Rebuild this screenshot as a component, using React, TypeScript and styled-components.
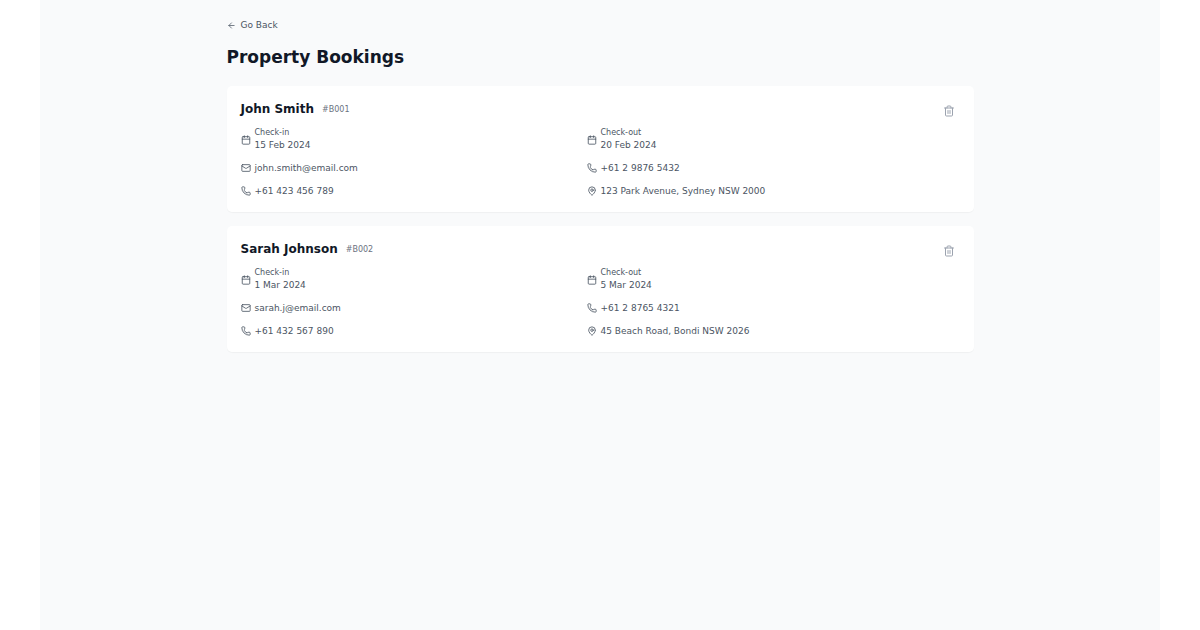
import React from 'react';
import styled, { createGlobalStyle } from 'styled-components';
import { ArrowLeft, Calendar, Mail, MapPin, Phone, Trash2 } from 'lucide-react';

const GlobalStyle = createGlobalStyle`
  *, *::before, *::after { box-sizing: border-box; }
  body {
    margin: 0;
    background: #ffffff;
    font-family: "DejaVu Sans", sans-serif;
    color: #4b5563;
  }
  h1, h2, p { margin: 0; }
  svg { flex-shrink: 0; }
  button { font: inherit; color: inherit; background: none; border: 0; padding: 0; cursor: pointer; }
`;

const Page = styled.div`
  min-height: 100vh;
  margin: 0 40px;
  padding: 18px 16px;
  background: #f9fafb;
`;

const Container = styled.main`
  max-width: 747px;
  margin: 0 auto;
`;

const BackButton = styled.button`
  display: flex;
  align-items: center;
  gap: 5px;
  font-size: 9px;
  line-height: 14px;
`;

const Title = styled.h1`
  margin-top: 15px;
  font-size: 17px;
  line-height: 20px;
  color: #111827;
`;

const BookingList = styled.div`
  display: flex;
  flex-direction: column;
  gap: 14px;
  margin-top: 19px;
`;

const Card = styled.article`
  display: flex;
  align-items: flex-start;
  gap: 19px;
  padding: 14px;
  background: #ffffff;
  border-radius: 5px;
  box-shadow: 0 1px 1px rgba(0, 0, 0, 0.04);
`;

const CardBody = styled.div`
  flex: 1;
  min-width: 0;
`;

const Guest = styled.header`
  display: flex;
  align-items: center;
  gap: 8px;
  margin-bottom: 8px;
`;

const GuestName = styled.h2`
  font-size: 12px;
  line-height: 19px;
  color: #111827;
`;

const Reference = styled.span`
  font-size: 8px;
  line-height: 12px;
  color: #6b7280;
`;

const DeleteButton = styled.button`
  display: flex;
  padding: 5px;
  color: #9ca3af;
`;

const Details = styled.div`
  display: grid;
  grid-template-columns: 1fr 1fr;
  column-gap: 14px;
  row-gap: 9px;
`;

const Detail = styled.div`
  display: flex;
  align-items: center;
  gap: 4px;
  font-size: 9px;
  line-height: 14px;
`;

const Label = styled.p`
  font-size: 8px;
  line-height: 12px;
`;

const Value = styled.p`
  line-height: 13px;
`;

type Booking = {
  id: string;
  name: string;
  checkIn: string;
  checkOut: string;
  email: string;
  mobile: string;
  phone: string;
  address: string;
};

const bookings: Booking[] = [
  {
    id: 'B001',
    name: 'John Smith',
    checkIn: '15 Feb 2024',
    checkOut: '20 Feb 2024',
    email: 'john.smith@email.com',
    phone: '+61 2 9876 5432',
    mobile: '+61 423 456 789',
    address: '123 Park Avenue, Sydney NSW 2000',
  },
  {
    id: 'B002',
    name: 'Sarah Johnson',
    checkIn: '1 Mar 2024',
    checkOut: '5 Mar 2024',
    email: 'sarah.j@email.com',
    phone: '+61 2 8765 4321',
    mobile: '+61 432 567 890',
    address: '45 Beach Road, Bondi NSW 2026',
  },
];

function BookingCard({ booking }: { booking: Booking }) {
  return (
    <Card>
      <CardBody>
        <Guest>
          <GuestName>{booking.name}</GuestName>
          <Reference>#{booking.id}</Reference>
        </Guest>
        <Details>
          <Detail>
            <Calendar size={10} />
            <div>
              <Label>Check-in</Label>
              <Value>{booking.checkIn}</Value>
            </div>
          </Detail>
          <Detail>
            <Calendar size={10} />
            <div>
              <Label>Check-out</Label>
              <Value>{booking.checkOut}</Value>
            </div>
          </Detail>
          <Detail><Mail size={10} />{booking.email}</Detail>
          <Detail><Phone size={10} />{booking.phone}</Detail>
          <Detail><Phone size={10} />{booking.mobile}</Detail>
          <Detail><MapPin size={10} />{booking.address}</Detail>
        </Details>
      </CardBody>
      <DeleteButton type="button" aria-label={`Delete booking ${booking.id}`}>
        <Trash2 size={12} />
      </DeleteButton>
    </Card>
  );
}

export default function App() {
  return (
    <>
      <GlobalStyle />
      <Page>
        <Container>
          <BackButton type="button"><ArrowLeft size={9} />Go Back</BackButton>
          <Title>Property Bookings</Title>
          <BookingList>
            {bookings.map((booking) => <BookingCard key={booking.id} booking={booking} />)}
          </BookingList>
        </Container>
      </Page>
    </>
  );
}
